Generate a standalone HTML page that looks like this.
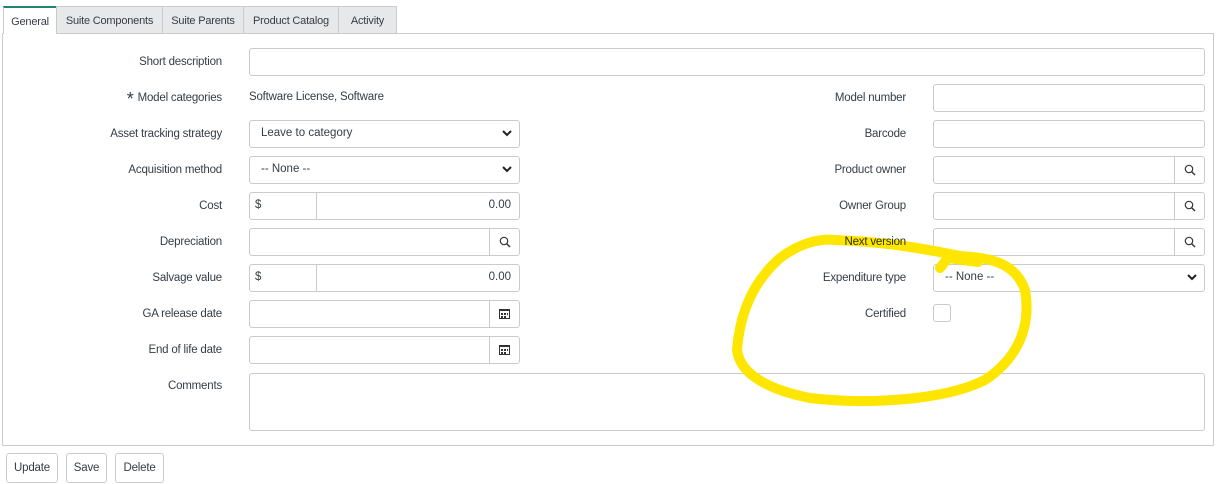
<!DOCTYPE html><html><head><style>
body{margin:0;width:1216px;height:484px;background:#fff;font-family:"Liberation Sans",sans-serif;font-size:11.5px;color:#343d47;position:relative;overflow:hidden}
.a{position:absolute}
.tab{position:absolute;top:6px;height:27px;line-height:29px;text-align:center;background:#e6e8ea;border:1px solid #cbcbcb;border-bottom:none;box-sizing:border-box;font-size:11px;letter-spacing:-0.2px}
.in{position:absolute;height:28px;border:1px solid #cbcbcb;border-radius:3px;box-sizing:border-box;background:#fff}
.lb{position:absolute;width:200px;text-align:right;line-height:14px;letter-spacing:-0.2px}
.ic{position:absolute;right:0;top:0;width:29px;height:26px;border-left:1px solid #cbcbcb;display:flex;align-items:center;justify-content:center}
.btn{position:absolute;top:453px;height:30px;border:1px solid #cbcbcb;border-radius:3px;box-sizing:border-box;line-height:28px;text-align:center;background:#fff;letter-spacing:-0.2px}
.chev{position:absolute;right:6px;top:7px}
</style></head><body>
<div class="a" style="left:2px;top:33px;width:1212px;height:413px;border:1px solid #cbcbcb;box-sizing:border-box"></div>
<div class="tab" style="left:3px;width:54px;background:#fff;border-top:2px solid #1f8476;height:28px">General</div>
<div class="tab" style="left:56px;width:107px">Suite Components</div>
<div class="tab" style="left:162px;width:82px">Suite Parents</div>
<div class="tab" style="left:243px;width:96px">Product Catalog</div>
<div class="tab" style="left:338px;width:59px">Activity</div>

<div class="lb" style="left:22px;top:55px">Short description</div>
<div class="in" style="left:249px;top:48px;width:956px"></div>
<div class="lb" style="left:22px;top:91px"><span style="font-size:18px;vertical-align:-4px;margin-right:4px">*</span>Model categories</div>
<div class="a" style="left:249px;top:91px;letter-spacing:-0.2px">Software License, Software</div>
<div class="lb" style="left:22px;top:127px">Asset tracking strategy</div>
<div class="in" style="left:249px;top:120px;width:271px;padding:6px 11px">Leave to category<svg class="chev" width="12" height="10" viewBox="0 0 12 10"><path d="M2 3l4 4 4-4" fill="none" stroke="#222" stroke-width="2"/></svg></div>
<div class="lb" style="left:22px;top:163px">Acquisition method</div>
<div class="in" style="left:249px;top:156px;width:271px;padding:6px 11px">-- None --<svg class="chev" width="12" height="10" viewBox="0 0 12 10"><path d="M2 3l4 4 4-4" fill="none" stroke="#222" stroke-width="2"/></svg></div>
<div class="lb" style="left:22px;top:199px">Cost</div>
<div class="in" style="left:249px;top:192px;width:271px"><span class="a" style="left:5px;top:6px">$</span><div class="a" style="left:66px;top:0;height:26px;border-left:1px solid #cbcbcb"></div><span class="a" style="right:8px;top:6px">0.00</span></div>
<div class="lb" style="left:22px;top:235px">Depreciation</div>
<div class="in" style="left:249px;top:228px;width:271px"><div class="ic"><svg width="12" height="12" viewBox="0 0 12 12"><circle cx="5" cy="5" r="3.7" fill="none" stroke="#333" stroke-width="1.2"/><path d="M7.7 7.7L11 11" stroke="#333" stroke-width="1.4"/></svg></div></div>
<div class="lb" style="left:22px;top:271px">Salvage value</div>
<div class="in" style="left:249px;top:264px;width:271px"><span class="a" style="left:5px;top:6px">$</span><div class="a" style="left:66px;top:0;height:26px;border-left:1px solid #cbcbcb"></div><span class="a" style="right:8px;top:6px">0.00</span></div>
<div class="lb" style="left:22px;top:307px">GA release date</div>
<div class="in" style="left:249px;top:300px;width:271px"><div class="ic"><svg width="11" height="10" viewBox="0 0 11 10"><rect x="0.5" y="1.5" width="10" height="8" fill="none" stroke="#333"/><path d="M2 4h2v2H2zM5 4h2v2H5zM8 4h1v2H8zM2 7h2v2H2zM5 7h2v2H5z" fill="#333"/><path d="M0 0h11v2H0z" fill="#333"/></svg></div></div>
<div class="lb" style="left:22px;top:343px">End of life date</div>
<div class="in" style="left:249px;top:336px;width:271px"><div class="ic"><svg width="11" height="10" viewBox="0 0 11 10"><rect x="0.5" y="1.5" width="10" height="8" fill="none" stroke="#333"/><path d="M2 4h2v2H2zM5 4h2v2H5zM8 4h1v2H8zM2 7h2v2H2zM5 7h2v2H5z" fill="#333"/><path d="M0 0h11v2H0z" fill="#333"/></svg></div></div>
<div class="lb" style="left:22px;top:379px">Comments</div>
<div class="in" style="left:249px;top:373px;width:956px;height:58px"></div>

<div class="lb" style="left:706px;top:91px">Model number</div>
<div class="in" style="left:933px;top:84px;width:272px"></div>
<div class="lb" style="left:706px;top:127px">Barcode</div>
<div class="in" style="left:933px;top:120px;width:272px"></div>
<div class="lb" style="left:706px;top:163px">Product owner</div>
<div class="in" style="left:933px;top:156px;width:272px"><div class="ic"><svg width="12" height="12" viewBox="0 0 12 12"><circle cx="5" cy="5" r="3.7" fill="none" stroke="#333" stroke-width="1.2"/><path d="M7.7 7.7L11 11" stroke="#333" stroke-width="1.4"/></svg></div></div>
<div class="lb" style="left:706px;top:199px">Owner Group</div>
<div class="in" style="left:933px;top:192px;width:272px"><div class="ic"><svg width="12" height="12" viewBox="0 0 12 12"><circle cx="5" cy="5" r="3.7" fill="none" stroke="#333" stroke-width="1.2"/><path d="M7.7 7.7L11 11" stroke="#333" stroke-width="1.4"/></svg></div></div>
<div class="in" style="left:933px;top:228px;width:272px"><div class="ic"><svg width="12" height="12" viewBox="0 0 12 12"><circle cx="5" cy="5" r="3.7" fill="none" stroke="#333" stroke-width="1.2"/><path d="M7.7 7.7L11 11" stroke="#333" stroke-width="1.4"/></svg></div></div>
<div class="lb" style="left:706px;top:271px">Expenditure type</div>
<div class="in" style="left:933px;top:264px;width:272px;padding:6px 11px">-- None --<svg class="chev" width="12" height="10" viewBox="0 0 12 10"><path d="M2 3l4 4 4-4" fill="none" stroke="#222" stroke-width="2"/></svg></div>
<div class="lb" style="left:706px;top:307px">Certified</div>
<div class="in" style="left:933px;top:304px;width:18px;height:18px"></div>

<svg class="a" style="left:0;top:0" width="1216" height="484"><path d="M940 268 L948 258 L978 262 M835 240 C890 242 930 250 960 256 C990 258 1015 262 1025 290 C1032 330 1015 360 985 380 C945 400 870 405 810 398 C770 390 740 375 737 350 C740 310 755 280 780 258 C800 243 820 238 835 240" fill="none" stroke="#ffe600" stroke-width="10" stroke-linecap="round" stroke-linejoin="round"/></svg>
<div class="lb" style="left:706px;top:235px;color:#2a3300">Next version</div>

<div class="btn" style="left:6px;width:52px">Update</div>
<div class="btn" style="left:66px;width:41px">Save</div>
<div class="btn" style="left:115px;width:49px">Delete</div>
</body></html>
